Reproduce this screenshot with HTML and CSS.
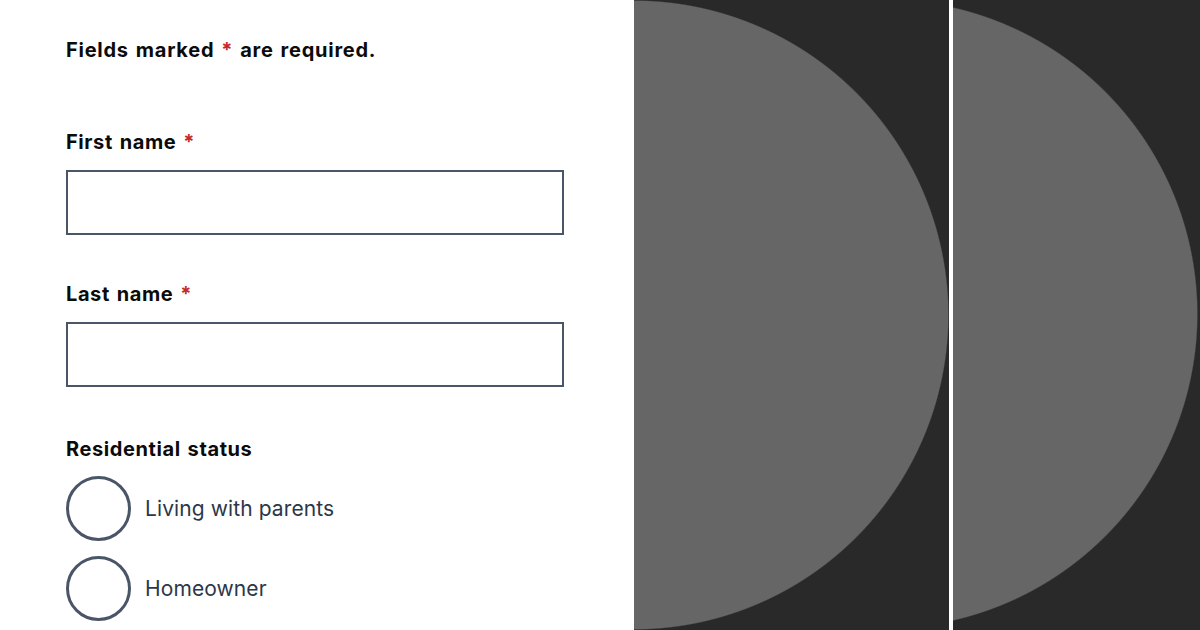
FILE: index.html
```html
<!DOCTYPE html>
<html lang="en">
<head>
<meta charset="utf-8">
<title>Form</title>
<link rel="stylesheet" href="styles.css">
</head>
<body>
<div class="page">
  <form class="form">
    <p class="note">Fields marked <span class="req">*</span> are required.</p>
    <div class="field">
      <label class="label" for="first">First name <span class="req">*</span></label>
      <input class="input" id="first" type="text">
    </div>
    <div class="field">
      <label class="label" for="last">Last name <span class="req">*</span></label>
      <input class="input" id="last" type="text">
    </div>
    <div class="group" role="radiogroup" aria-labelledby="status">
      <div class="label" id="status">Residential status</div>
      <label class="radio"><span class="circle"></span><span class="radio-text">Living with parents</span></label>
      <label class="radio"><span class="circle"></span><span class="radio-text">Homeowner</span></label>
    </div>
  </form>
  <div class="art">
    <div class="panel panel-a"></div>
    <div class="panel panel-b"></div>
  </div>
</div>
</body>
</html>
```
FILE: styles.css
```css
* { box-sizing: border-box; }
html, body { margin: 0; padding: 0; }
body {
  width: 1200px;
  height: 630px;
  overflow: hidden;
  background: #ffffff;
  font-family: Inter, "Liberation Sans", sans-serif;
  color: #0b0b0b;
}
.page {
  display: flex;
  height: 630px;
}
.form {
  width: 634px;
  flex: none;
  padding: 38px 0 0 66px;
  display: flex;
  flex-direction: column;
}
.note {
  margin: 0 0 68px;
  font-size: 20px;
  line-height: 24px;
  font-weight: 700;
  letter-spacing: 0.75px;
  word-spacing: 1.5px;
}
.req { color: #c62828; }
.field {
  display: flex;
  flex-direction: column;
  margin-bottom: 47px;
}
.label {
  display: block;
  font-size: 20px;
  line-height: 24px;
  font-weight: 700;
  letter-spacing: 0.6px;
  word-spacing: 1.5px;
  margin-bottom: 16px;
}
.input {
  width: 498px;
  height: 65px;
  border: 2px solid #4a5568;
  border-radius: 0;
  background: #fff;
  margin: 0;
  font: inherit;
}
.group {
  display: flex;
  flex-direction: column;
  margin-top: 3px;
}
.group .label { margin-bottom: 15px; }
.radio {
  display: flex;
  align-items: center;
  gap: 14px;
  margin-bottom: 15px;
}
.circle {
  width: 65px;
  height: 65px;
  border: 3px solid #4a5568;
  border-radius: 50%;
  flex: none;
}
.radio-text {
  font-size: 21px;
  color: #2d3748;
  letter-spacing: 0.1px;
}
.art {
  flex: 1;
  display: flex;
  gap: 4px;
  background: #ffffff;
}
.panel {
  height: 630px;
  background-color: #292929;
}
.panel-a {
  width: 315px;
  background-image: radial-gradient(circle 315px at 0 315px, #666666 99.6%, #292929 100%);
}
.panel-b {
  flex: 1;
  background-image: radial-gradient(circle 315px at -70px 314px, #666666 99.6%, #292929 100%);
}
```
